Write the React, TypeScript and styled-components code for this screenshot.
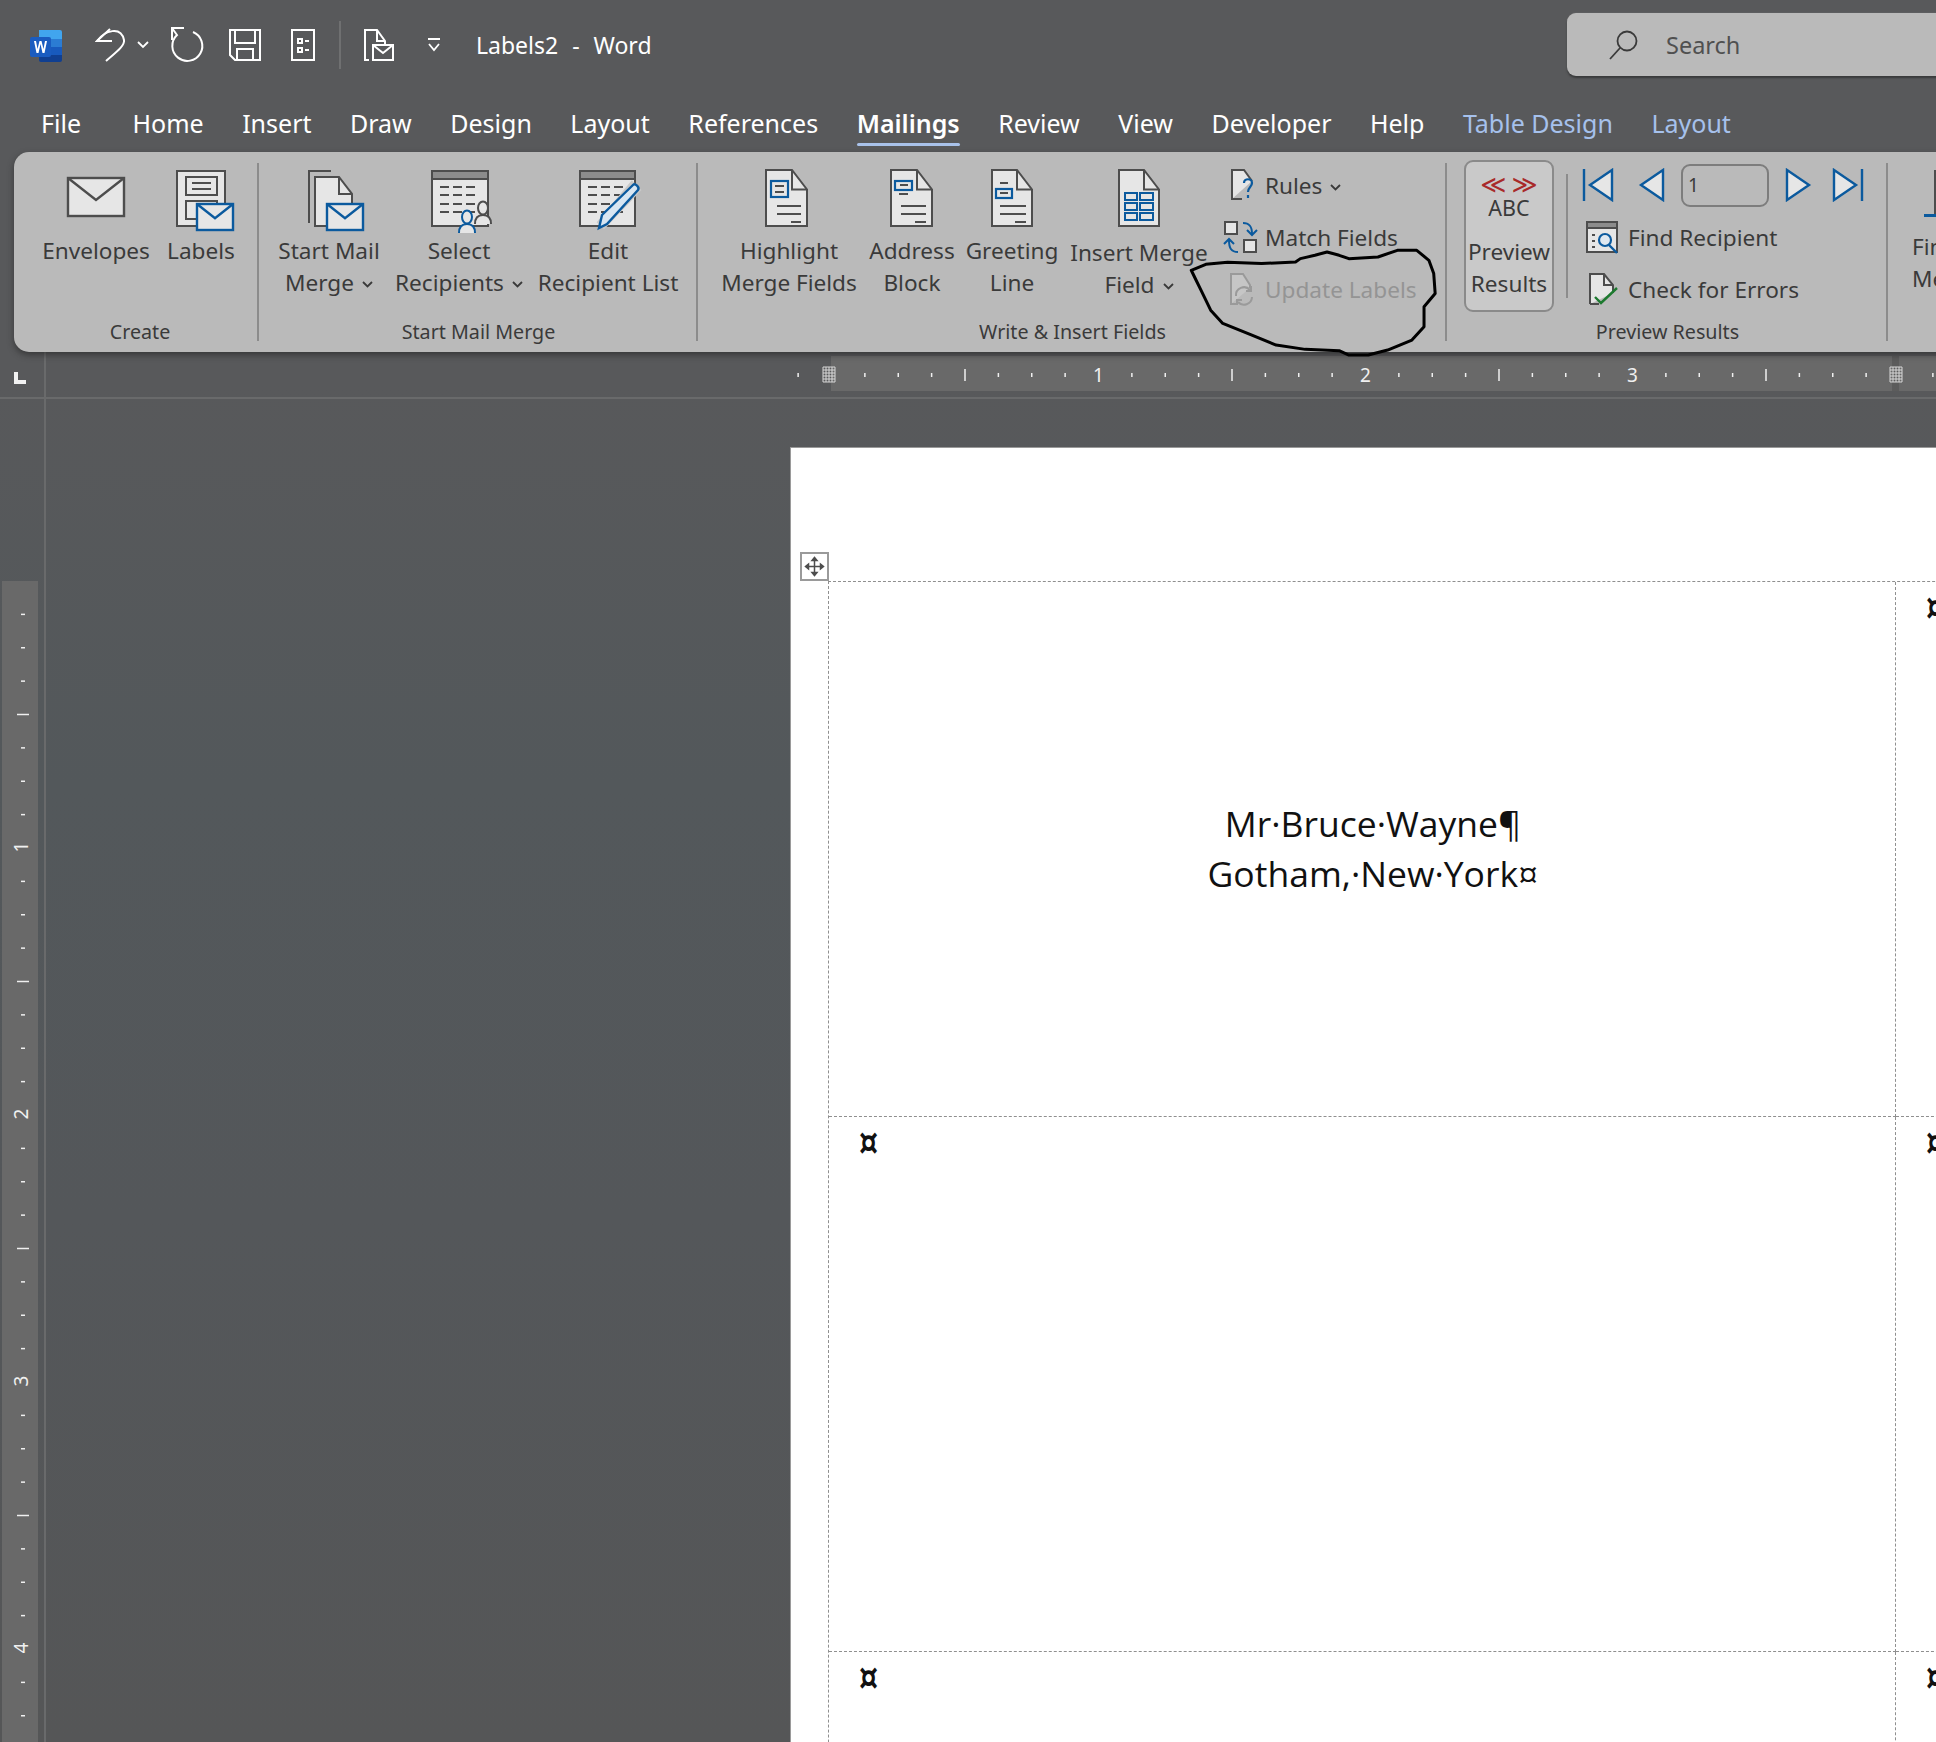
import React from 'react';
import styled, { createGlobalStyle } from 'styled-components';

const GlobalStyle = createGlobalStyle`
    html, body {
        margin: 0;
        padding: 0;
        background: #565a5c;
    }
    * {
        box-sizing: border-box;
    }
`;

const LINE = '#4d4d4d';
const FILL = '#e6e6e6';
const BLUE = '#0b5a9e';
const FONT = `"Noto Sans", "Open Sans", sans-serif`;

const Window = styled.div`
    position: relative;
    width: 1936px;
    height: 1742px;
    overflow: hidden;
    display: flex;
    flex-direction: column;
    font-family: ${FONT};
    background: linear-gradient(180deg, #58595b 0%, #58595b 22%, #53585b 45%, #54575a 70%, #555657 100%);
`;

const TitleBar = styled.div`
    display: flex;
    align-items: center;
    height: 90px;
    padding-left: 30px;
    flex: none;
`;

const QuickIcon = styled.svg<{ $gap: number }>`
    flex: none;
    margin-right: ${p => p.$gap}px;
`;

const QuickSep = styled.div`
    width: 2px;
    height: 48px;
    background: #6f7071;
    margin-right: 23px;
`;

const DocTitle = styled.div`
    color: #fff;
    font-size: 23px;
    word-spacing: 1px;
    white-space: pre;
    margin-left: 35px;
`;

const SearchBox = styled.div`
    position: absolute;
    left: 1567px;
    top: 13px;
    width: 500px;
    height: 63px;
    background: #bababa;
    border-radius: 9px;
    box-shadow: 0 2px 2px #38393a, 0 0 1px #8a8a8a;
    display: flex;
    align-items: center;
    padding-left: 42px;
    gap: 27px;
    color: #505050;
    font-size: 23.5px;
`;

const TabRow = styled.div`
    display: flex;
    height: 62px;
    padding-left: 41px;
    gap: 38.5px;
    flex: none;
`;

const Tab = styled.div<{ $active?: boolean; $context?: boolean; $after?: number }>`
    position: relative;
    height: 62px;
    line-height: 66px;
    font-size: 25px;
    white-space: nowrap;
    color: ${p => (p.$context ? '#a6c1ec' : '#fff')};
    font-weight: ${p => (p.$active ? 600 : 400)};
    margin-right: ${p => p.$after ?? 0}px;
    &::after {
        content: '';
        display: ${p => (p.$active ? 'block' : 'none')};
        position: absolute;
        left: 0;
        right: 0;
        bottom: 6px;
        height: 3px;
        border-radius: 2px;
        background: #a9c2ea;
    }
`;

const Ribbon = styled.div`
    position: relative;
    display: flex;
    align-items: center;
    flex: none;
    width: 1990px;
    height: 200px;
    margin-left: 14px;
    background: #bababa;
    border-radius: 15px;
    box-shadow: 0 3px 6px rgba(30, 30, 30, 0.55);
    color: #3a3a3a;
    font-size: 22.6px;
    z-index: 1;
`;

const Group = styled.div<{ $w: number }>`
    width: ${p => p.$w}px;
    height: 200px;
    flex: none;
    display: flex;
    flex-direction: column;
`;

const GroupBody = styled.div<{ $pad: number }>`
    display: flex;
    height: 165px;
    padding-left: ${p => p.$pad}px;
`;

const GroupLabel = styled.div<{ $offset?: number }>`
    height: 30px;
    line-height: 30px;
    text-align: center;
    font-size: 19.7px;
    white-space: nowrap;
    padding-left: ${p => p.$offset ?? 0}px;
`;

const GroupSep = styled.div`
    flex: none;
    width: 2px;
    height: 178px;
    background: #8c8c8c;
`;

const LargeButton = styled.div<{ $w: number; $low?: boolean }>`
    width: ${p => p.$w}px;
    flex: none;
    display: flex;
    flex-direction: column;
    align-items: center;
    padding-top: 16px;
    line-height: 32px;
    text-align: center;
    white-space: nowrap;
    & > span {
        position: relative;
        top: ${p => (p.$low ? 2 : 0)}px;
    }
`;

const LargeIcon = styled.svg`
    display: block;
    width: 72px;
    height: 67px;
    flex: none;
`;

const Chevron = styled.svg`
    display: inline-block;
    margin-left: 8px;
    vertical-align: 3px;
`;

const SmallColumn = styled.div`
    display: flex;
    flex-direction: column;
    padding: 7px 0 0 2px;
`;

const SmallRow = styled.div<{ $disabled?: boolean; $gap?: number }>`
    display: flex;
    align-items: center;
    height: 52px;
    white-space: nowrap;
    gap: ${p => p.$gap ?? 10}px;
    color: ${p => (p.$disabled ? '#949494' : 'inherit')};
    & > svg {
        overflow: visible;
        flex: none;
    }
`;

const PreviewToggle = styled.div`
    flex: none;
    width: 90px;
    height: 152px;
    margin: 8px 0 0 17px;
    background: #c9c9c9;
    border: 2px solid #8a8a8a;
    border-radius: 9px;
    display: flex;
    flex-direction: column;
    align-items: center;
    line-height: 32px;
`;

const Guillemets = styled.div`
    font-family: "DejaVu Sans", sans-serif;
    color: #a82a2a;
    font-size: 25px;
    line-height: 26px;
    margin-top: 10px;
    word-spacing: -3px;
    white-space: pre;
`;

const AbcText = styled.div`
    font-size: 21.5px;
    line-height: 24px;
    margin: -2px 0 16px;
`;

const InnerSep = styled.div`
    flex: none;
    width: 2px;
    height: 124px;
    background: #8c8c8c;
    margin: 22px 17px 0 12px;
`;

const NavColumn = styled.div`
    display: flex;
    flex-direction: column;
    padding-top: 7px;
`;

const NavRow = styled.div`
    display: flex;
    align-items: center;
    height: 52px;
    width: 290px;
    margin-left: -3px;
`;

const NavGap = styled.span<{ $w: number }>`
    width: ${p => p.$w}px;
    flex: none;
`;

const RecordInput = styled.div`
    width: 88px;
    height: 43px;
    margin: 0 16px 0 16px;
    border: 2px solid #7d7d7d;
    border-radius: 9px;
    padding-left: 5px;
    line-height: 38px;
    font-size: 19px;
`;

const FinishButton = styled.div`
    padding: 18px 0 0 24px;
    line-height: 32px;
    white-space: nowrap;
    text-align: left;
`;

const FinishIcon = styled.div`
    width: 40px;
    height: 47px;
    margin: 0 0 14px 12px;
    border-bottom: 3px solid ${BLUE};
    &::before {
        content: '';
        display: block;
        height: 100%;
        margin-left: 10px;
        border-left: 2px solid ${LINE};
    }
`;

const Scribble = styled.svg`
    position: absolute;
    left: 1170px;
    top: 95px;
    width: 257px;
    height: 113px;
    overflow: visible;
`;

const RulerRow = styled.div`
    display: flex;
    height: 47px;
    flex: none;
    border-bottom: 2px solid #696a6b;
`;

const CornerCell = styled.div`
    flex: none;
    width: 46px;
    height: 45px;
    padding: 20px 0 0 14px;
    border-right: 2px solid #696a6b;
`;

const CornerMark = styled.div`
    width: 12px;
    height: 12px;
    border-left: 4px solid #f2f2f2;
    border-bottom: 4px solid #f2f2f2;
`;

const MainRow = styled.div`
    display: flex;
    flex: 1;
    min-height: 0;
`;

const SideRuler = styled.div`
    flex: none;
    width: 46px;
    border-right: 2px solid #696a6b;
`;

const Workspace = styled.div`
    flex: 1;
    padding: 48px 0 0 744px;
    min-width: 0;
`;

const Page = styled.div`
    position: relative;
    height: 1400px;
    width: 1300px;
    background: #fff;
    border-left: 1px solid #9a9a9a;
    border-top: 1px solid #9a9a9a;
    padding: 133px 0 0 37px;
`;

const MoveHandle = styled.div`
    position: absolute;
    left: 9px;
    top: 104px;
    width: 29px;
    height: 29px;
    border: 2px solid #9a9a9a;
    background: #fff;
    display: flex;
    align-items: center;
    justify-content: center;
`;

const LabelGrid = styled.div`
    display: grid;
    grid-template-columns: 1067px 1067px;
    grid-auto-rows: 535px;
    border-top: 1px dashed #8f8f8f;
    border-left: 1px dashed #8f8f8f;
`;

const Cell = styled.div<{ $center?: boolean }>`
    border-right: 1px dashed #8f8f8f;
    border-bottom: 1px dashed #8f8f8f;
    display: flex;
    flex-direction: column;
    ${p =>
        p.$center
            ? `align-items: center; justify-content: center; padding: 0 0 2px 22px;`
            : `padding: 10px 0 0 30px;`}
`;

const CellMark = styled.span`
    display: block;
    width: 20px;
    font-family: "DejaVu Sans", sans-serif;
    font-weight: 700;
    font-size: 30px;
    line-height: 30px;
    color: #111;
    transform: scaleY(1.25);
`;

const AddressLine = styled.div`
    font-family: "Open Sans", sans-serif;
    font-size: 35.5px;
    line-height: 50px;
    color: #111;
    white-space: pre;
`;

const envelope = (x: number, y: number, w = 36, h = 26) => (
    <g>
        <rect x={x} y={y} width={w} height={h} fill={FILL} stroke={BLUE} strokeWidth="2.4" />
        <path d={`M${x} ${y}L${x + w / 2} ${y + h * 0.55}L${x + w} ${y}`} fill="none" stroke={BLUE} strokeWidth="2.4" />
    </g>
);

const person = (cx: number, cy: number, color: string) => (
    <g fill={FILL} stroke={color} strokeWidth="2">
        <ellipse cx={cx} cy={cy} rx="5" ry="6.5" />
        <path d={`M${cx - 8} ${cy + 16}c0-6 3-9 8-9s8 3 8 9`} />
    </g>
);

const doc = (x0: number, x1: number, y0: number, y1: number, fold = 14) => (
    <g>
        <path d={`M${x0} ${y0}H${x1 - fold}L${x1} ${y0 + fold * 1.3}V${y1}H${x0}Z`} fill={FILL} stroke={LINE} strokeWidth="2" />
        <path d={`M${x1 - fold} ${y0}V${y0 + fold * 1.3}H${x1}`} fill="none" stroke={LINE} strokeWidth="2" />
    </g>
);

const rows = (x0: number, x1: number, ys: number[]) => (
    <path d={ys.map(y => `M${x0} ${y}H${x1}`).join('')} stroke={LINE} strokeWidth="2" />
);

const tableHead = (x0: number, x1: number) => (
    <g>
        <rect x={x0} y="3" width={x1 - x0} height="55" fill={FILL} stroke={LINE} strokeWidth="2" />
        <rect x={x0} y="3" width={x1 - x0} height="8" fill="#8c8c8c" stroke={LINE} strokeWidth="2" />
        <path
            d={[19, 27, 36, 44]
                .map(y => `M${x0 + 8} ${y}h9m4 0h9m4 0h9`)
                .join('')}
            stroke={LINE}
            strokeWidth="2"
        />
    </g>
);

const fieldDoc = (x0: number, x1: number, inner: React.ReactNode) => (
    <g>
        {doc(x0, x1, 2, 58, 15)}
        {inner}
    </g>
);

const Large = ({ children }: { children: React.ReactNode }) => (
    <LargeIcon viewBox="0 0 72 67">{children}</LargeIcon>
);

const ChevronDown = () => (
    <Chevron width="11" height="7" viewBox="0 0 11 7">
        <path d="M1 1l4.5 4.5L10 1" fill="none" stroke="#3a3a3a" strokeWidth="1.8" />
    </Chevron>
);

const tri = (dir: 'l' | 'r', bar: boolean) => (
    <svg width="32" height="34" viewBox="0 0 32 34">
        {dir === 'l' ? (
            <>
                {bar && <path d="M2 1v32" stroke={BLUE} strokeWidth="2.4" />}
                <path d="M30 2L8 17l22 15z" fill={FILL} stroke={BLUE} strokeWidth="2.4" />
            </>
        ) : (
            <>
                <path d="M2 2l22 15L2 32z" fill={FILL} stroke={BLUE} strokeWidth="2.4" />
                {bar && <path d="M30 1v32" stroke={BLUE} strokeWidth="2.4" />}
            </>
        )}
    </svg>
);

const HorizontalRuler = () => {
    const inch = 267;
    const origin = 831.5;
    const ticks = [];
    for (let i = -1; i <= 33; i++) {
        if (i === 0) continue;
        const x = origin + (i * inch) / 8;
        if (i % 8 === 0) continue;
        const long = i % 4 === 0;
        ticks.push(<rect key={i} x={x - 0.75} y={long ? 17 : 21} width="1.5" height={long ? 12 : 4} fill="#f0f0f0" />);
    }
    const hatch = (x: number) => (
        <g stroke="#d8d8d8" strokeWidth="1">
            {[0, 1, 2, 3, 4].map(i => (
                <path key={`v${i}`} d={`M${x + i * 3} 15v15`} />
            ))}
            {[0, 1, 2, 3, 4, 5].map(i => (
                <path key={`h${i}`} d={`M${x} ${15 + i * 3}h12`} />
            ))}
        </g>
    );
    return (
        <svg width="1890" height="45" viewBox="46 0 1890 45">
            <rect x="831" y="4" width="1110" height="35" fill="#696969" />
            <rect x="1892" y="4" width="7" height="35" fill="#5c5c5c" />
            {ticks}
            {hatch(823)}
            {hatch(1890)}
            {[1, 2, 3].map(n => (
                <text key={n} x={origin + n * inch} y="30" textAnchor="middle" fill="#f0f0f0" fontSize="19" fontFamily={FONT}>
                    {n}
                </text>
            ))}
        </svg>
    );
};

const VerticalRuler = () => {
    const inch = 267;
    const origin = 182;
    const ticks = [];
    for (let i = 1; i <= 41; i++) {
        if (i % 8 === 0) continue;
        const y = origin + (i * inch) / 8;
        const long = i % 4 === 0;
        ticks.push(<rect key={i} x={long ? 17 : 21} y={y - 0.75} width={long ? 12 : 4} height="1.5" fill="#f0f0f0" />);
    }
    return (
        <svg width="44" height="1343" viewBox="0 0 44 1343" style={{ display: 'block' }}>
            <rect x="2" y={origin} width="36" height="1170" fill="#696969" />
            {ticks}
            {[1, 2, 3, 4].map(n => (
                <text
                    key={n}
                    x="0"
                    y="0"
                    transform={`translate(28 ${origin - 1 + n * inch}) rotate(-90)`}
                    textAnchor="middle"
                    fill="#f0f0f0"
                    fontSize="19"
                    fontFamily={FONT}
                >
                    {n}
                </text>
            ))}
        </svg>
    );
};

export default function App() {
    return (
        <Window>
            <GlobalStyle />
            <TitleBar>
                <QuickIcon $gap={32} width="33" height="33" viewBox="0 0 33 33">
                    <path d="M9 1h21a2 2 0 0 1 2 2v7H9z" fill="#41a5ee" />
                    <rect x="9" y="10" width="23" height="8" fill="#2b7cd3" />
                    <rect x="9" y="18" width="23" height="8" fill="#185abd" />
                    <path d="M9 26h23v5a2 2 0 0 1-2 2H11a2 2 0 0 1-2-2z" fill="#103f91" />
                    <rect x="0" y="8" width="21" height="20" rx="2" fill="#1a5cc0" />
                    <path d="M4 12l2.5 12h2L10.5 15l2 9h2L17 12h-2l-1.5 8-2-8h-2l-2 8L6 12z" fill="#fff" />
                </QuickIcon>
                <QuickIcon $gap={10} width="32" height="34" viewBox="0 0 32 34">
                    <path d="M15 1L2 13h15" fill="none" stroke="#fff" strokeWidth="2" />
                    <path d="M2 13C10 2 26-2 29 12c1 6-9 13-18 21" fill="none" stroke="#fff" strokeWidth="2" />
                </QuickIcon>
                <QuickIcon $gap={22} width="12" height="8" viewBox="0 0 12 8">
                    <path d="M1 1l5 5 5-5" fill="none" stroke="#fff" strokeWidth="1.8" />
                </QuickIcon>
                <QuickIcon $gap={24} width="34" height="36" viewBox="0 0 34 36">
                    <path d="M1 13V1h12" fill="none" stroke="#fff" strokeWidth="2" />
                    <path d="M1 1l5 7A15 15 0 1 0 22 5" fill="none" stroke="#fff" strokeWidth="2" />
                </QuickIcon>
                <QuickIcon $gap={30} width="32" height="32" viewBox="0 0 32 32">
                    <path d="M1 1h30v30H6l-5-5z" fill="none" stroke="#fff" strokeWidth="2" />
                    <path d="M6 1v13h20V1M8 31V20h16v11" fill="none" stroke="#fff" strokeWidth="2" />
                </QuickIcon>
                <QuickIcon $gap={24} width="24" height="32" viewBox="0 0 24 32">
                    <rect x="1" y="1" width="22" height="30" fill="none" stroke="#fff" strokeWidth="2" />
                    <path d="M7 10h4v4H7zM7 19h4v4H7zM14 12h4M14 21h4" fill="none" stroke="#fff" strokeWidth="2" />
                </QuickIcon>
                <QuickSep />
                <QuickIcon $gap={33} width="30" height="32" viewBox="0 0 30 32">
                    <path d="M5 31H1V1h12l8 11v4" fill="none" stroke="#fff" strokeWidth="2" />
                    <path d="M13 1v11h8" fill="none" stroke="#fff" strokeWidth="2" />
                    <rect x="9" y="16" width="20" height="15" fill="none" stroke="#fff" strokeWidth="2" />
                    <path d="M9 16l10 8 10-8" fill="none" stroke="#fff" strokeWidth="2" />
                </QuickIcon>
                <QuickIcon $gap={0} width="14" height="14" viewBox="0 0 14 14">
                    <path d="M1 1h12M2 6l5 6 5-6" fill="none" stroke="#fff" strokeWidth="1.8" />
                </QuickIcon>
                <DocTitle>{'Labels2  -  Word'}</DocTitle>
                <SearchBox>
                    <svg width="30" height="30" viewBox="0 0 30 30">
                        <circle cx="18" cy="11" r="9.5" fill="none" stroke="#3a3a3a" strokeWidth="1.8" />
                        <path d="M11 18L1 29" stroke="#3a3a3a" strokeWidth="1.8" />
                    </svg>
                    Search
                </SearchBox>
            </TitleBar>

            <TabRow>
                <Tab $after={13}>File</Tab>
                <Tab>Home</Tab>
                <Tab>Insert</Tab>
                <Tab>Draw</Tab>
                <Tab>Design</Tab>
                <Tab>Layout</Tab>
                <Tab>References</Tab>
                <Tab $active>Mailings</Tab>
                <Tab>Review</Tab>
                <Tab>View</Tab>
                <Tab>Developer</Tab>
                <Tab>Help</Tab>
                <Tab $context>Table Design</Tab>
                <Tab $context>Layout</Tab>
            </TabRow>

            <Ribbon>
                <Group $w={243}>
                    <GroupBody $pad={26}>
                        <LargeButton $w={112}>
                            <Large>
                                <rect x="8" y="10" width="56" height="38" fill={FILL} stroke={LINE} strokeWidth="2.4" />
                                <path d="M8 10l28 22 28-22" fill="none" stroke={LINE} strokeWidth="2.4" />
                            </Large>
                            <span>Envelopes</span>
                        </LargeButton>
                        <LargeButton $w={98}>
                            <Large>
                                <rect x="12" y="3" width="48" height="55" fill={FILL} stroke={LINE} strokeWidth="2" />
                                <rect x="21" y="9" width="31" height="18" fill={FILL} stroke={LINE} strokeWidth="2" />
                                {rows(27, 46, [15, 21])}
                                <rect x="21" y="33" width="31" height="18" fill={FILL} stroke={LINE} strokeWidth="2" />
                                {envelope(32, 36)}
                            </Large>
                            <span>Labels</span>
                        </LargeButton>
                    </GroupBody>
                    <GroupLabel $offset={9}>Create</GroupLabel>
                </Group>
                <GroupSep />
                <Group $w={437}>
                    <GroupBody $pad={10}>
                        <LargeButton $w={120}>
                            <Large>
                                <path d="M16 55V3h22" fill="none" stroke={LINE} strokeWidth="2" />
                                {doc(22, 59, 9, 58, 13)}
                                {envelope(34, 36)}
                            </Large>
                            <span>Start Mail</span>
                            <span>
                                Merge
                                <ChevronDown />
                            </span>
                        </LargeButton>
                        <LargeButton $w={140}>
                            <Large>
                                {tableHead(9, 65)}
                                {person(60, 40, LINE)}
                                {person(44, 49, BLUE)}
                            </Large>
                            <span>Select</span>
                            <span>
                                Recipients
                                <ChevronDown />
                            </span>
                        </LargeButton>
                        <LargeButton $w={158}>
                            <Large>
                                {tableHead(8, 63)}
                                <path d="M28 54l4 4 34-36-6-6z" fill="#c8c8c8" stroke="#c8c8c8" strokeWidth="5" />
                                <path d="M27 60l3-13 31-30c2-2 7 2 5 5L35 56z" fill="#d8e6f2" stroke={BLUE} strokeWidth="2.4" />
                            </Large>
                            <span>Edit</span>
                            <span>Recipient List</span>
                        </LargeButton>
                    </GroupBody>
                    <GroupLabel $offset={2}>Start Mail Merge</GroupLabel>
                </Group>
                <GroupSep />
                <Group $w={747}>
                    <GroupBody $pad={21}>
                        <LargeButton $w={140}>
                            <Large>
                                {fieldDoc(
                                    13,
                                    54,
                                    <>
                                        {rows(24, 48, [38, 46])}
                                        {rows(38, 48, [54])}
                                        <rect x="18" y="13" width="17" height="16" fill={FILL} stroke={BLUE} strokeWidth="2.2" />
                                        {rows(22, 31, [18, 24])}
                                    </>
                                )}
                            </Large>
                            <span>Highlight</span>
                            <span>Merge Fields</span>
                        </LargeButton>
                        <LargeButton $w={106}>
                            <Large>
                                {fieldDoc(
                                    15,
                                    56,
                                    <>
                                        {rows(25, 50, [38, 46])}
                                        {rows(39, 50, [54])}
                                        {rows(23, 32, [26])}
                                        <rect x="19" y="13" width="17" height="9" fill={FILL} stroke={BLUE} strokeWidth="2.2" />
                                        {rows(24, 32, [17])}
                                    </>
                                )}
                            </Large>
                            <span>Address</span>
                            <span>Block</span>
                        </LargeButton>
                        <LargeButton $w={94}>
                            <Large>
                                {fieldDoc(
                                    16,
                                    56,
                                    <>
                                        {rows(24, 50, [38, 46])}
                                        {rows(39, 50, [54])}
                                        {rows(24, 32, [15])}
                                        <rect x="20" y="21" width="16" height="9" fill={FILL} stroke={BLUE} strokeWidth="2.2" />
                                        {rows(24, 32, [25])}
                                    </>
                                )}
                            </Large>
                            <span>Greeting</span>
                            <span>Line</span>
                        </LargeButton>
                        <LargeButton $w={160} $low>
                            <Large>
                                {fieldDoc(
                                    16,
                                    56,
                                    <path
                                        d="M22 25h12v7H22zM37 25h13v7H37zM22 35h12v7H22zM37 35h13v7H37zM22 45h12v7H22zM37 45h13v7H37z"
                                        fill={FILL}
                                        stroke={BLUE}
                                        strokeWidth="2"
                                    />
                                )}
                            </Large>
                            <span>Insert Merge</span>
                            <span>
                                Field
                                <ChevronDown />
                            </span>
                        </LargeButton>
                        <SmallColumn>
                            <SmallRow>
                                <svg width="34" height="32" viewBox="0 0 34 32">
                                    <path d="M11 30V1h12l8 11" fill={FILL} stroke={LINE} strokeWidth="2" />
                                    <path d="M11 1v29h10" fill="none" stroke={LINE} strokeWidth="2" />
                                    <path d="M23 14c0-5 8-5 8 0 0 4-4 4-4 9M27 26v3" fill="none" stroke={BLUE} strokeWidth="2.2" />
                                </svg>
                                <span>
                                    Rules
                                    <ChevronDown />
                                </span>
                            </SmallRow>
                            <SmallRow>
                                <svg width="34" height="32" viewBox="-2 0 34 32">
                                    <rect x="2" y="1" width="12" height="12" fill={FILL} stroke={LINE} strokeWidth="2" />
                                    <rect x="21" y="19" width="12" height="12" fill={FILL} stroke={LINE} strokeWidth="2" />
                                    <path d="M20 2c7 0 9 4 9 11m-5-4l5 5 5-5" fill="none" stroke={BLUE} strokeWidth="2" />
                                    <path d="M15 31c-7 0-9-4-9-12m-5 4l5-5 5 5" fill="none" stroke={BLUE} strokeWidth="2" />
                                </svg>
                                Match Fields
                            </SmallRow>
                            <SmallRow $disabled>
                                <svg width="34" height="32" viewBox="0 0 34 32">
                                    <path d="M10 31V1h12l7 11v3" fill="#c6c6c6" stroke="#9a9a9a" strokeWidth="2" />
                                    <path d="M10 1v30h6" fill="none" stroke="#9a9a9a" strokeWidth="2" />
                                    <path d="M15 23a8 8 0 0 1 14-6m1-4v5h-5M31 24a8 8 0 0 1-14 5m-1 3v-5h5" fill="none" stroke="#9a9a9a" strokeWidth="2" />
                                </svg>
                                Update Labels
                            </SmallRow>
                        </SmallColumn>
                    </GroupBody>
                    <GroupLabel $offset={2}>Write &amp; Insert Fields</GroupLabel>
                </Group>
                <GroupSep />
                <Group $w={439}>
                    <GroupBody $pad={0}>
                        <PreviewToggle>
                            <Guillemets>{'≪ ≫'}</Guillemets>
                            <AbcText>ABC</AbcText>
                            <span>Preview</span>
                            <span>Results</span>
                        </PreviewToggle>
                        <InnerSep />
                        <NavColumn>
                            <NavRow>
                                {tri('l', true)}
                                <NavGap $w={19} />
                                {tri('l', false)}
                                <RecordInput>1</RecordInput>
                                {tri('r', false)}
                                <NavGap $w={15} />
                                {tri('r', true)}
                            </NavRow>
                            <SmallRow $gap={9}>
                                <svg width="34" height="33" viewBox="0 0 34 33">
                                    <rect x="2" y="1" width="30" height="30" fill={FILL} stroke={LINE} strokeWidth="2" />
                                    <rect x="2" y="1" width="30" height="6" fill="#8c8c8c" stroke={LINE} strokeWidth="2" />
                                    <path d="M7 14h3M7 20h3M7 26h3" stroke={LINE} strokeWidth="2" />
                                    <circle cx="20" cy="19" r="6" fill="#dfe8f0" stroke={BLUE} strokeWidth="2.2" />
                                    <path d="M24 24l8 8" stroke={BLUE} strokeWidth="2.4" />
                                </svg>
                                Find Recipient
                            </SmallRow>
                            <SmallRow $gap={9}>
                                <svg width="34" height="32" viewBox="0 0 34 32">
                                    <path d="M5 31V1h14l9 11v8" fill={FILL} stroke={LINE} strokeWidth="2" />
                                    <path d="M19 1v11h9M5 31h9" fill="none" stroke={LINE} strokeWidth="2" />
                                    <path d="M10 24l6 6 16-15" fill="none" stroke="#1d7a2f" strokeWidth="2.4" />
                                </svg>
                                Check for Errors
                            </SmallRow>
                        </NavColumn>
                    </GroupBody>
                    <GroupLabel $offset={2}>Preview Results</GroupLabel>
                </Group>
                <GroupSep />
                <Group $w={100}>
                    <FinishButton>
                        <FinishIcon />
                        Finish &amp;
                        <br />
                        Merge
                    </FinishButton>
                </Group>
                <Scribble viewBox="1040 440 530 340" preserveAspectRatio="none">
                    <path
                        d="M1055 510L1085 492L1130 486L1200 490L1270 485L1280 475L1310 465L1335 455L1360 465L1380 475L1440 470L1480 450L1520 450L1545 480L1555 520L1558 580L1535 620L1535 680L1510 720L1460 750L1420 765L1380 765L1360 752L1290 748L1230 735L1180 705L1120 670L1095 630L1075 570L1065 540Z"
                        fill="none"
                        stroke="#000"
                        strokeWidth="3"
                        strokeLinejoin="round"
                        vectorEffect="non-scaling-stroke"
                    />
                </Scribble>
            </Ribbon>

            <RulerRow>
                <CornerCell>
                    <CornerMark />
                </CornerCell>
                <HorizontalRuler />
            </RulerRow>

            <MainRow>
                <SideRuler>
                    <VerticalRuler />
                </SideRuler>
                <Workspace>
                    <Page>
                        <MoveHandle>
                            <svg width="21" height="21" viewBox="0 0 21 21">
                                <path
                                    d="M10.5 2v17M2 10.5h17M8 4.5l2.5-3 2.5 3zM8 16.5l2.5 3 2.5-3zM4.5 8l-3 2.5 3 2.5zM16.5 8l3 2.5-3 2.5z"
                                    fill="#4d4d4d"
                                    stroke="#4d4d4d"
                                    strokeWidth="1.5"
                                />
                            </svg>
                        </MoveHandle>
                        <LabelGrid>
                            <Cell $center>
                                <AddressLine>Mr·Bruce·Wayne¶</AddressLine>
                                <AddressLine>Gotham,·New·York¤</AddressLine>
                            </Cell>
                            <Cell>
                                <CellMark>¤</CellMark>
                            </Cell>
                            <Cell>
                                <CellMark>¤</CellMark>
                            </Cell>
                            <Cell>
                                <CellMark>¤</CellMark>
                            </Cell>
                            <Cell>
                                <CellMark>¤</CellMark>
                            </Cell>
                            <Cell>
                                <CellMark>¤</CellMark>
                            </Cell>
                        </LabelGrid>
                    </Page>
                </Workspace>
            </MainRow>
        </Window>
    );
}
